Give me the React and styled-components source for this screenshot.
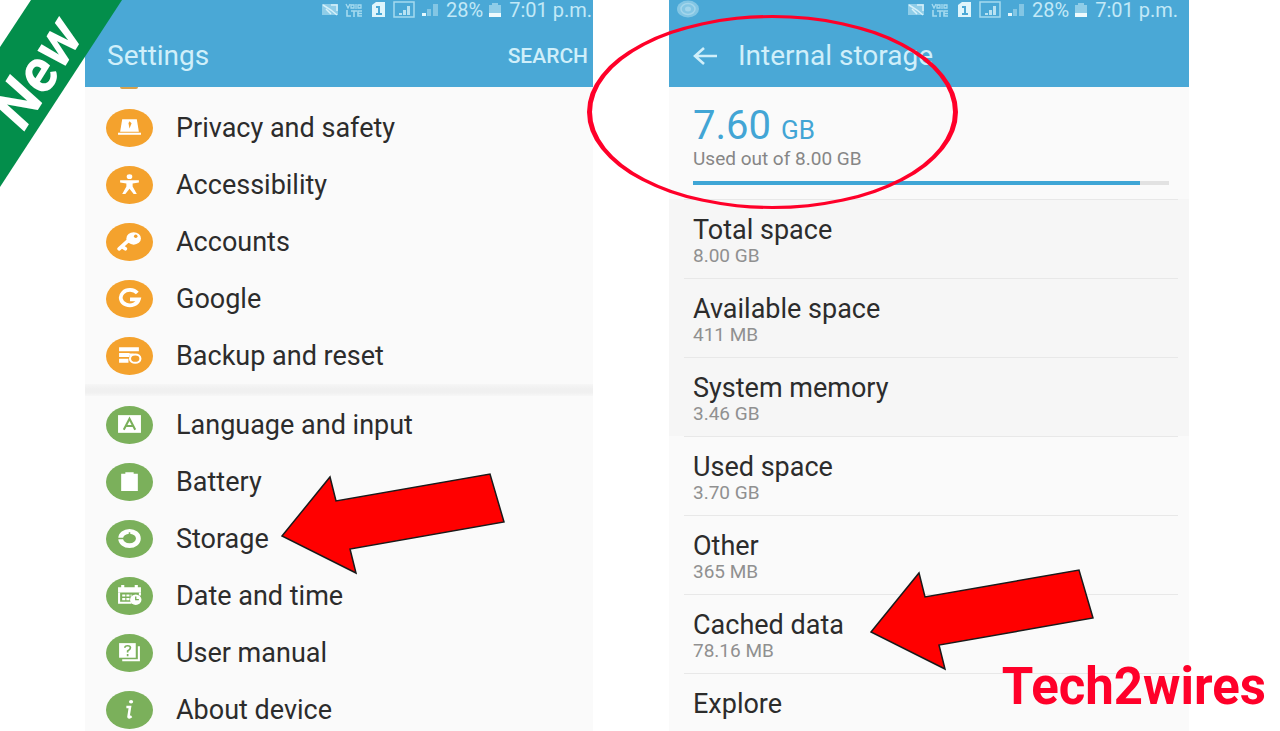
import React from "react";
import styled, { createGlobalStyle } from "styled-components";

const GlobalStyle = createGlobalStyle`
  * {
    box-sizing: border-box;
  }
  body {
    margin: 0;
    background: #fff;
    font-family: Roboto, "Liberation Sans", sans-serif;
  }
`;

const Page = styled.main`
  position: relative;
  display: grid;
  grid-template-columns: 508fr 520fr;
  column-gap: 76px;
  height: 100vh;
  padding: 0 91px 0 85px;
  overflow: hidden;
`;

const Phone = styled.section`
  min-width: 0;
  background: #fafafa;
`;

const TopBar = styled.header`
  background: #4aa8d6;
  color: #d0effa;
`;

const StatusBar = styled.div`
  display: flex;
  align-items: center;
  justify-content: flex-end;
  height: 20px;
  padding-right: ${(props) => props.$inset}px;
  font-size: 20px;
  line-height: 20px;
  white-space: nowrap;
  color: #c2e9f7;
`;

const StatusIcons = styled.svg`
  width: 118px;
  height: 18px;
  margin-right: 7px;
`;

const BatteryLevel = styled.svg`
  width: 12px;
  height: 16px;
  margin: 0 8px 0 6px;
`;

const Notice = styled.svg`
  width: 24px;
  height: 20px;
  margin: 0 auto 0 7px;
`;

const TitleBar = styled.div`
  display: flex;
  align-items: center;
  height: 67px;
  padding: 4px 5px 0 22px;
`;

const Title = styled.h1`
  margin: 0;
  font-size: 28px;
  line-height: 30px;
  font-weight: 400;
`;

const SearchButton = styled.button`
  margin-left: auto;
  padding: 0;
  border: 0;
  background: none;
  color: inherit;
  font: 500 21px/24px Roboto, "Liberation Sans", sans-serif;
`;

const BackButton = styled.button`
  display: flex;
  margin-right: 19px;
  padding: 0;
  border: 0;
  background: none;
  color: inherit;
`;

const Peek = styled.div`
  height: 12px;
  padding-left: 35px;

  &::before {
    content: "";
    display: block;
    width: 18px;
    height: 2px;
    border-radius: 0 0 9px 9px;
    background: #d9a24c;
  }
`;

const Menu = styled.nav`
  display: flex;
  flex-direction: column;
`;

const MenuItem = styled.a`
  display: flex;
  align-items: center;
  gap: 23px;
  height: 57px;
  padding-left: 21px;
  color: #2c2c2c;
  font-size: 27px;
  line-height: 30px;
  text-decoration: none;
`;

const Badge = styled.span`
  display: flex;
  align-items: center;
  justify-content: center;
  width: 47px;
  height: 38px;
  border-radius: 50%;
  background: ${(props) => props.$color};
  color: ${(props) => props.$color};
`;

const Divider = styled.div`
  height: 12px;
  background: linear-gradient(#f6f6f6, #f0f0f0 40%, #f0f0f0 70%, #f7f7f7);
`;

const Summary = styled.div`
  height: 112px;
  padding: 17px 20px 0 24px;
`;

const Used = styled.p`
  margin: 0;
  color: #42a5d5;
  font-size: 40px;
  line-height: 44px;
`;

const Unit = styled.span`
  font-size: 26px;
  line-height: 26px;
`;

const UsedNote = styled.p`
  margin: 0 0 11px;
  color: #868686;
  font-size: 19px;
  line-height: 22px;
`;

const Track = styled.div`
  height: 4px;
  background: #e2e2e2;
`;

const Fill = styled.div`
  height: 4px;
  background: #3fa6d6;
`;

const StorageList = styled.ul`
  margin: 0;
  padding: 0;
  list-style: none;
`;

const StorageItem = styled.li`
  height: 79px;
  padding: 0 11px 0 15px;
  background: ${(props) => (props.$shaded ? "#f6f6f6" : "#fafafa")};
`;

const StorageBody = styled.div`
  padding: 15px 9px 0;
  border-top: 1px solid #e8e8e8;
`;

const StorageName = styled.div`
  color: #2c2c2c;
  font-size: 27px;
  line-height: 30px;
`;

const StorageValue = styled.div`
  color: #909090;
  font-size: 19px;
  line-height: 22px;
`;

const Ribbon = styled.svg`
  position: absolute;
  left: 0;
  top: 0;
  width: 122px;
  height: 187px;
`;

const Ring = styled.svg`
  position: absolute;
  left: 587px;
  top: 15px;
  width: 371px;
  height: 194px;
  pointer-events: none;
`;

const Pointer = styled.svg`
  position: absolute;
  left: ${(props) => props.$left}px;
  top: ${(props) => props.$top}px;
  width: 226px;
  height: 104px;
  pointer-events: none;
`;

const Brand = styled.div`
  position: absolute;
  right: 14px;
  bottom: 14px;
  color: #ff0029;
  font-size: 51px;
  line-height: 60px;
  font-weight: 700;
`;

const icons = {
  privacy: (
    <>
      <path d="M5 2h14l2 12H3z" fill="#fff" />
      <path d="M1 15h22v2H1z" fill="#fff" />
      <path d="M12 4l2 2-2 5-1-5z" fill="currentColor" />
    </>
  ),
  accessibility: (
    <>
      <ellipse cx="12" cy="2.500" rx="2.700" ry="2.300" fill="#fff" />
      <path d="M3 6h18v2l-6 1v3l4 7h-3l-4-5-4 5H5l4-7V9L3 8z" fill="#fff" />
    </>
  ),
  accounts: (
    <>
      <ellipse cx="16" cy="7" rx="7" ry="6" fill="#fff" />
      <path d="M11 9L2 17M5 15l3 2" stroke="#fff" strokeWidth="3.500" strokeLinecap="round" />
      <circle cx="18" cy="5" r="1.700" fill="currentColor" />
    </>
  ),
  google: (
    <path
      d="M19.500 4.800A8.800 7.400 0 1 0 21 10.800H12.500"
      fill="none"
      stroke="#fff"
      strokeWidth="3.600"
    />
  ),
  backup: (
    <>
      <path d="M2 2h19v4H2zM2 7.500h10v4H2zM2 13h9v4H2z" fill="#fff" />
      <ellipse cx="17.500" cy="13" rx="5" ry="4" fill="currentColor" stroke="#fff" strokeWidth="2" />
      <path d="M11 8h5l-3 4z" fill="#fff" />
    </>
  ),
  language: (
    <>
      <path d="M1 1h22v17H1z" fill="#fff" />
      <path d="M6.500 15L12 4.500 17.500 15M8.500 11.500h7" fill="none" stroke="currentColor" strokeWidth="2" />
    </>
  ),
  battery: <path d="M4 2.500h4V1h8v1.500h4V19H4z" fill="#fff" />,
  storage: (
    <>
      <ellipse cx="12" cy="10" rx="8.500" ry="6.800" fill="none" stroke="#fff" strokeWidth="4.600" />
      <path d="M0 10h9M12 4v5" stroke="currentColor" strokeWidth="1.500" />
    </>
  ),
  date: (
    <>
      <path d="M1 2h3V0h3v2h10V0h3v2h3v5H1z" fill="#fff" />
      <path d="M2 7v10h12M22 7v3" fill="none" stroke="#fff" strokeWidth="2" />
      <path d="M5 10h9M5 13.500h7" stroke="#fff" strokeWidth="2" strokeDasharray="3 1" />
      <ellipse cx="18" cy="14" rx="5.500" ry="5" fill="#fff" />
      <path d="M18 11v3h3" fill="none" stroke="currentColor" strokeWidth="1.300" />
    </>
  ),
  manual: (
    <>
      <path d="M2 1h16v14H2z" fill="#fff" />
      <path d="M5 17.500h16V4" fill="none" stroke="#fff" strokeWidth="2" />
      <path
        d="M7.500 5.500q0-2 2.700-2t2.700 2q0 1.500-2.700 3v1.500M10.200 11.500v2"
        fill="none"
        stroke="currentColor"
        strokeWidth="1.600"
      />
    </>
  ),
  about: (
    <>
      <ellipse cx="13.500" cy="2.500" rx="2" ry="1.700" fill="#fff" />
      <path d="M9 7.500h3.500L11 17q0 1.500 3-.500" fill="none" stroke="#fff" strokeWidth="2.400" />
    </>
  ),
};

const deviceItems = [
  { icon: "privacy", label: "Privacy and safety" },
  { icon: "accessibility", label: "Accessibility" },
  { icon: "accounts", label: "Accounts" },
  { icon: "google", label: "Google" },
  { icon: "backup", label: "Backup and reset" },
];

const systemItems = [
  { icon: "language", label: "Language and input" },
  { icon: "battery", label: "Battery" },
  { icon: "storage", label: "Storage" },
  { icon: "date", label: "Date and time" },
  { icon: "manual", label: "User manual" },
  { icon: "about", label: "About device" },
];

const storageItems = [
  { name: "Total space", value: "8.00 GB", shaded: true },
  { name: "Available space", value: "411 MB", shaded: true },
  { name: "System memory", value: "3.46 GB", shaded: true },
  { name: "Used space", value: "3.70 GB" },
  { name: "Other", value: "365 MB" },
  { name: "Cached data", value: "78.16 MB" },
  { name: "Explore" },
];

const Status = ({ inset, notice }) => (
  <StatusBar $inset={inset}>
    {notice && (
      <Notice viewBox="0 0 24 20">
        <ellipse cx="12" cy="9" rx="11" ry="8.500" fill="#83c6e4" />
        <ellipse cx="12" cy="9" rx="7" ry="5.500" fill="none" stroke="#a3d6ec" strokeWidth="1.500" />
        <ellipse cx="12" cy="9" rx="3" ry="2.500" fill="#a3d6ec" />
      </Notice>
    )}
    <StatusIcons viewBox="0 0 118 18" fill="none">
      <path d="M1 3h16v11H1z" fill="#8fcde8" />
      <path d="M2 4l8 5 6 5M5 8l5 5M10 4h6v6" stroke="#d6f1fa" strokeWidth="1.500" />
      <path d="M25 3l2 4 2-4M30 4h3v3h-3zM35 3v5M37 4h3v3h-3z" stroke="#a5daef" strokeWidth="1.300" />
      <path d="M26 9v6h4M30 10h6M33 10v6M41 10h-4v5h4M37 12.500h4" stroke="#a5daef" strokeWidth="1.600" />
      <path d="M51 4l4-3h9v15H51z" fill="#dff5fc" />
      <path d="M55 6h3v7M55 13h6" stroke="#4aa8d6" strokeWidth="2" />
      <path d="M73 1h20v15H73z" stroke="#a5daef" strokeWidth="1.500" />
      <path d="M78 14h3v-2h-3zM82 14h3V9h-3zM86 14h3V5h-3z" fill="#b8e2f2" />
      <path d="M101 15h4v-3h-4z" fill="#e3f7fd" />
      <path d="M106 15h4V8h-4zM112 15h5V3h-5z" fill="#83c6e4" />
    </StatusIcons>
    28%
    <BatteryLevel viewBox="0 0 12 16">
      <path d="M3 1h6v2h3v8H0V3h3z" fill="#8fcde8" />
      <path d="M0 11h12v4H0z" fill="#eefafd" />
    </BatteryLevel>
    7:01 p.m.
  </StatusBar>
);

const MenuGroup = ({ items, color }) => (
  <Menu>
    {items.map((item) => (
      <MenuItem href="#" key={item.icon}>
        <Badge $color={color}>
          <svg width="25" height="21" viewBox="0 0 24 20" aria-hidden="true">
            {icons[item.icon]}
          </svg>
        </Badge>
        {item.label}
      </MenuItem>
    ))}
  </Menu>
);

const RedArrow = ({ left, top }) => (
  <Pointer $left={left} $top={top} viewBox="0 0 226 104">
    <path
      d="M2 64L50 5l6 24 154-27 14 48L70 77l6 24z"
      fill="#f00"
      stroke="#1a1a1a"
      strokeWidth="1.500"
    />
  </Pointer>
);

const App = () => {
  const usedPercent = 94;

  return (
    <Page>
      <GlobalStyle />

      <Phone>
        <TopBar>
          <Status inset={1} />
          <TitleBar>
            <Title>Settings</Title>
            <SearchButton>SEARCH</SearchButton>
          </TitleBar>
        </TopBar>
        <Peek />
        <MenuGroup items={deviceItems} color="#f4a22d" />
        <Divider />
        <MenuGroup items={systemItems} color="#7bb05b" />
      </Phone>

      <Phone>
        <TopBar>
          <Status inset={11} notice />
          <TitleBar>
            <BackButton aria-label="Back">
              <svg width="28" height="22" viewBox="0 0 28 22" fill="none">
                <path d="M26 11H4M13 3L4 11l9 8" stroke="currentColor" strokeWidth="2.600" />
              </svg>
            </BackButton>
            <Title>Internal storage</Title>
          </TitleBar>
        </TopBar>
        <Summary>
          <Used>
            7.60 <Unit>GB</Unit>
          </Used>
          <UsedNote>Used out of 8.00 GB</UsedNote>
          <Track>
            <Fill style={{ width: `${usedPercent}%` }} />
          </Track>
        </Summary>
        <StorageList>
          {storageItems.map((item) => (
            <StorageItem key={item.name} $shaded={item.shaded}>
              <StorageBody>
                <StorageName>{item.name}</StorageName>
                {item.value && <StorageValue>{item.value}</StorageValue>}
              </StorageBody>
            </StorageItem>
          ))}
        </StorageList>
      </Phone>

      <Ribbon viewBox="0 0 122 187">
        <path d="M31 0h91L0 187V47z" fill="#038e4b" />
        <text
          transform="translate(24 132) rotate(-58)"
          fill="#fff"
          fontSize="60"
          fontWeight="700"
          fontStyle="italic"
        >
          New
        </text>
      </Ribbon>
      <Ring viewBox="0 0 371 194">
        <path
          fillRule="evenodd"
          fill="#ff0029"
          d="M0 97a185.500 97 0 0 1 371 0a185.500 97 0 0 1-371 0zM5 97a180.500 94 0 0 0 361 0a180.500 94 0 0 0-361 0z"
        />
      </Ring>
      <RedArrow left={280} top={472} />
      <RedArrow left={869} top={568} />
      <Brand>Tech2wires</Brand>
    </Page>
  );
};

export default App;
